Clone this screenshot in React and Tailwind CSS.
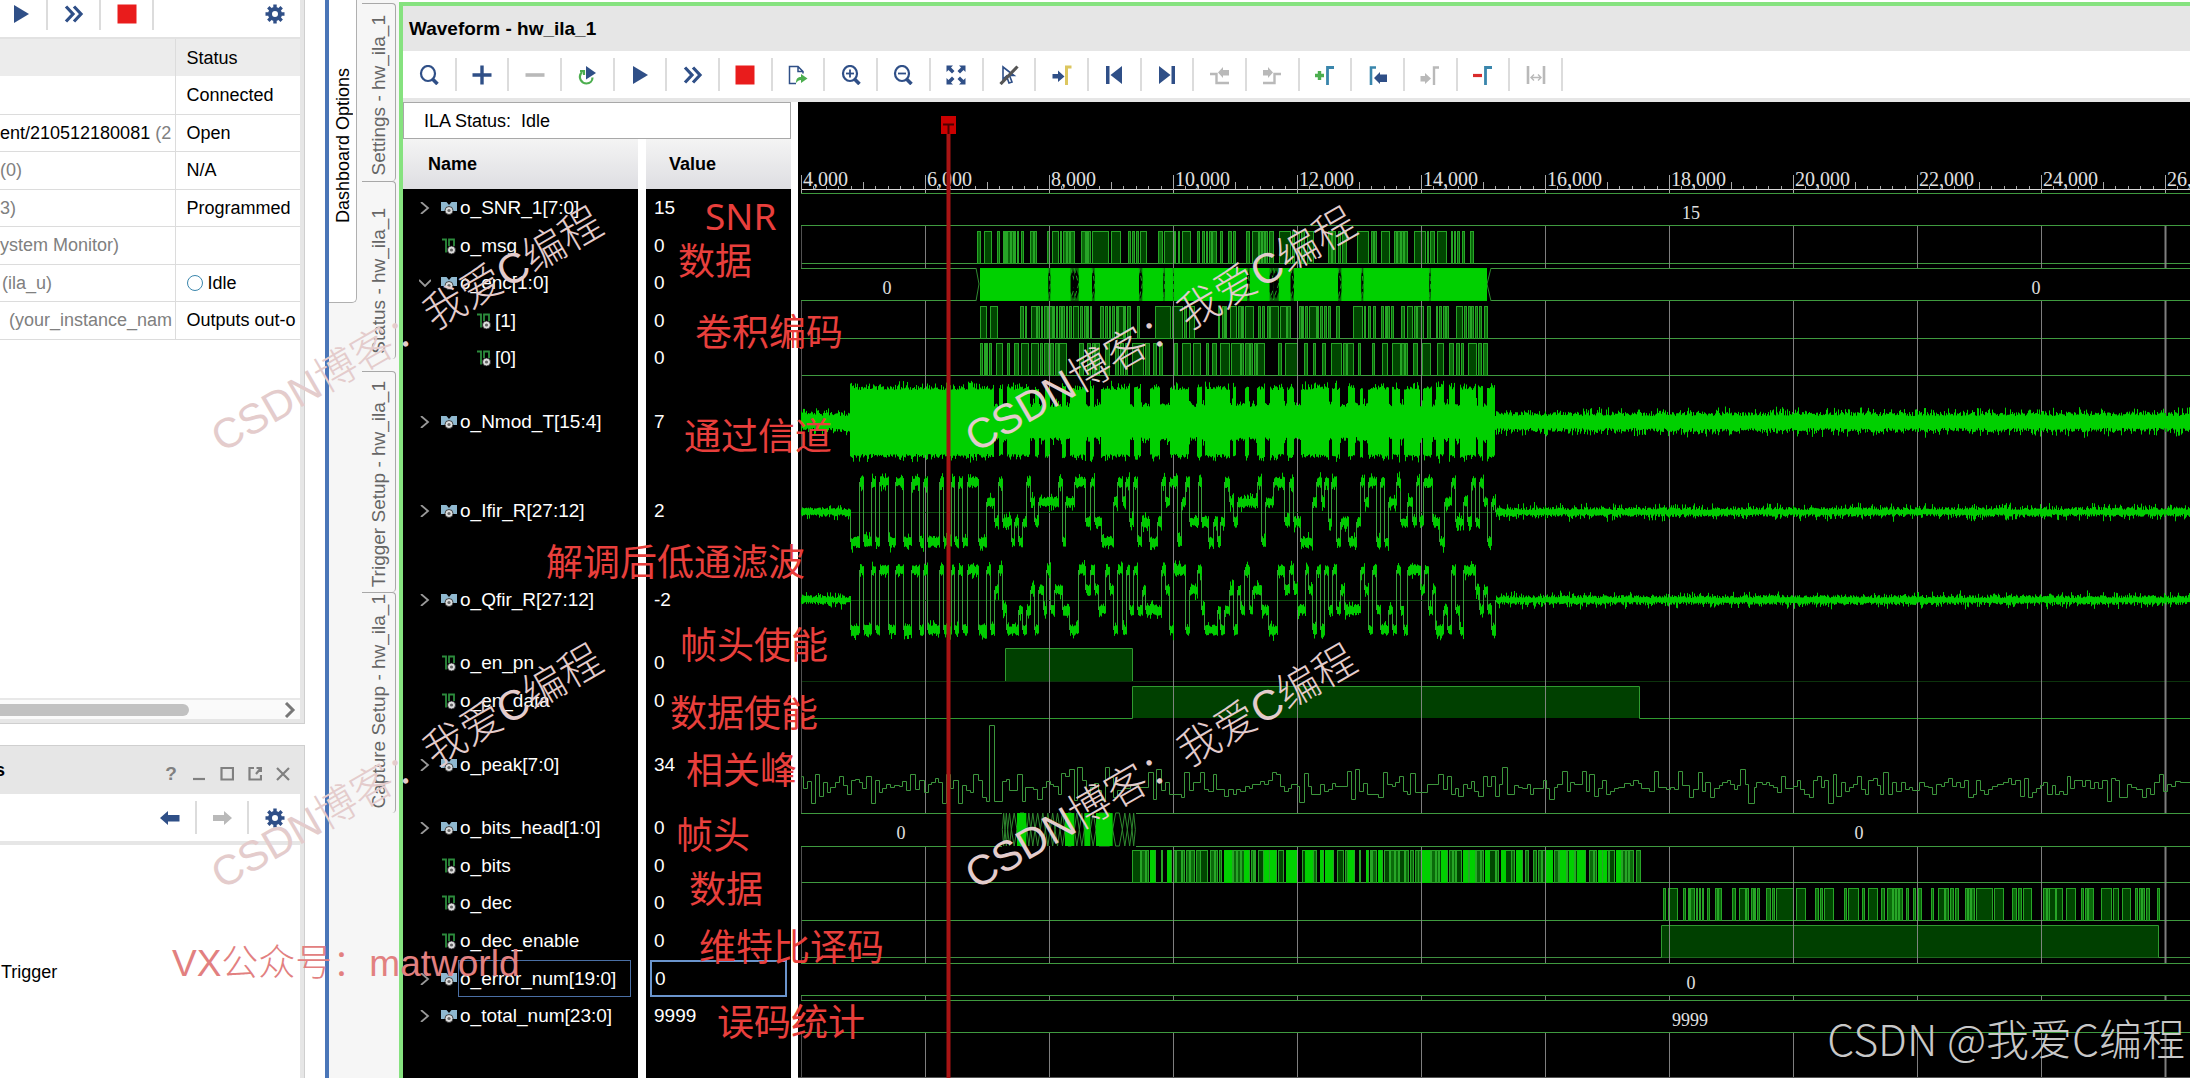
import { Fragment } from "react";

const NAVY = "#2f4f87";

/* ---------- icons ---------- */

const Icon = ({ children, size = 20 }) => (
  <svg width={size} height={size} viewBox="0 0 20 20" fill="none" aria-hidden="true">{children}</svg>
);

const Play = () => <Icon><path d="M3 1 L18 10 L3 19Z" fill={NAVY} /></Icon>;
const FastForward = () => (
  <Icon><path d="M2 2.5 L9 10 L2 17.5 M10 2.5 L17 10 L10 17.5" stroke={NAVY} strokeWidth="3.2" /></Icon>
);
const Stop = () => <Icon><rect x="0.5" y="0.5" width="19" height="19" fill="#e91c1c" /></Icon>;
const Gear = () => (
  <Icon>
    <circle cx="10" cy="10" r="5" stroke={NAVY} strokeWidth="4" />
    <path d="M10 0.5V4 M10 16V19.5 M0.5 10H4 M16 10H19.5 M3.3 3.3L5.8 5.8 M14.2 14.2L16.7 16.7 M3.3 16.7L5.8 14.2 M14.2 5.8L16.7 3.3" stroke={NAVY} strokeWidth="3.4" />
  </Icon>
);
const Search = ({ sign }) => (
  <Icon>
    <ellipse cx="9" cy="8.5" rx="7" ry="7.5" stroke={NAVY} strokeWidth="2.2" />
    <path d="M13.5 14 L18.5 19" stroke={NAVY} strokeWidth="3.6" />
    {sign && <path d="M5 8.5H13" stroke={NAVY} strokeWidth="1.8" />}
    {sign === "+" && <path d="M9 4.5V12.5" stroke={NAVY} strokeWidth="1.8" />}
  </Icon>
);
const Plus = () => <Icon><path d="M10 0.5V19.5 M0.5 10H19.5" stroke={NAVY} strokeWidth="3.4" /></Icon>;
const Minus = () => <Icon><path d="M0.5 10H19.5" stroke="#b9b9b9" strokeWidth="3.6" /></Icon>;
const Rerun = () => (
  <Icon>
    <path d="M3 6 H7 V10 M5 7 C0 13 5 18.5 9.5 18.5 C13 18.5 15.5 16 15.5 12.5" stroke="#4cae4f" strokeWidth="2.2" />
    <path d="M9 1 L19 8 L9 14.500Z" fill={NAVY} />
  </Icon>
);
const Export = () => (
  <Icon>
    <path d="M8 18.500H1.500V1.500H10L15 6.500V8.500 M10 1.500V6.500H15" stroke={NAVY} strokeWidth="1.5" />
    <path d="M8 18 C8 13.500 10 12 13 12 V9 L19.500 13.500 L13 18 V15 C11 15 9.500 16 8 18Z" fill="#4cae4f" />
  </Icon>
);
const Fit = () => (
  <Icon>
    <path d="M0.5 0.5H7L5 2.500L8.500 6L6 8.500L2.500 5L0.500 7Z M19.500 0.500H13L15 2.500L11.500 6L14 8.500L17.500 5L19.500 7Z M0.500 19.500H7L5 17.500L8.500 14L6 11.500L2.500 15L0.500 13Z M19.500 19.500H13L15 17.500L11.500 14L14 11.500L17.500 15L19.500 13Z" fill={NAVY} />
  </Icon>
);
const NoPointer = () => (
  <Icon>
    <path d="M4 2 L4 14 L7.500 11 L10 18 L13 17 L10.500 10.500 H15Z" stroke={NAVY} strokeWidth="1.6" />
    <path d="M1.500 19 L18.500 1.500" stroke="#555" strokeWidth="3.2" />
  </Icon>
);
const GotoCursor = () => (
  <Icon>
    <path d="M0.500 9H6V5.500L12.500 11.500L6 17V13.500H0.500Z" fill={NAVY} />
    <path d="M14.500 20V2H19.500" stroke="#dcc65f" strokeWidth="3" />
  </Icon>
);
const First = () => <Icon><path d="M2 1H5.500V19H2Z M18 1V19L6.500 10Z" fill={NAVY} /></Icon>;
const Last = () => <Icon><path d="M14.500 1H18V19H14.500Z M2 1V19L13.500 10Z" fill={NAVY} /></Icon>;
const PrevEdge = () => (
  <Icon>
    <path d="M0 9H6.500V18H19" stroke="#b9b9b9" strokeWidth="2.4" />
    <path d="M8 7.500L13 2V5H19V10.500H13V13Z" fill="#b9b9b9" />
  </Icon>
);
const NextEdge = () => (
  <Icon>
    <path d="M1 18H12.500V9H19" stroke="#b9b9b9" strokeWidth="2.4" />
    <path d="M11 7.500L6 2V5H1V10.500H6V13Z" fill="#b9b9b9" />
  </Icon>
);
const AddMarker = () => (
  <Icon>
    <path d="M4.500 6V15 M0 10.500H9" stroke="#4cae4f" strokeWidth="3.4" />
    <path d="M12.500 20V2.500H19" stroke="#3a86ac" strokeWidth="2.8" />
  </Icon>
);
const PrevMarker = () => (
  <Icon>
    <path d="M3 20V2.500H8" stroke="#3a86ac" strokeWidth="2.6" />
    <path d="M6 13L12 7V9.500H19V17H12V19Z" fill={NAVY} />
  </Icon>
);
const NextMarker = () => (
  <Icon>
    <path d="M0.500 11H5V8L11 13.500L5 19V16.500H0.500Z" fill="#b9b9b9" />
    <path d="M14 20V2.500H19" stroke="#b9b9b9" strokeWidth="2.4" />
  </Icon>
);
const RemoveMarker = () => (
  <Icon>
    <path d="M0 10.500H9" stroke="#d92b2b" strokeWidth="3.2" />
    <path d="M12.500 20V2.500H19" stroke="#3a86ac" strokeWidth="2.8" />
  </Icon>
);
const Span = () => (
  <Icon>
    <path d="M2 1V19 M18 1V19" stroke="#b9b9b9" strokeWidth="2.6" />
    <path d="M5 12.500H15 M8 9.500L5 12.500L8 15.500 M12 9.500L15 12.500L12 15.500" stroke="#b9b9b9" strokeWidth="1.4" />
  </Icon>
);
const Arrow = ({ flip, color }) => (
  <Icon>
    <path d={flip ? "M20 10L12 3V7H1V13H12V17Z" : "M0 10L8 3V7H19.500V13.500H8V17Z"} fill={color} />
  </Icon>
);

const BusIcon = () => (
  <svg width="18" height="16" viewBox="0 0 18 16" className="shrink-0" aria-hidden="true">
    <path d="M1 2H6.500L9 5L11.500 2H17V11H1Z" fill="#8fb8cf" />
    <circle cx="9" cy="10.500" r="4" fill="#dedede" stroke="#222" strokeWidth="0.800" />
    <circle cx="9" cy="10.500" r="1.600" fill="#666" />
  </svg>
);
const BitIcon = () => (
  <svg width="16" height="18" viewBox="0 0 16 18" className="shrink-0" aria-hidden="true">
    <path d="M1 2.500H5V15.500 M8 9V2.500H13V9" stroke="#2c8c3c" strokeWidth="1.800" fill="none" />
    <circle cx="10.500" cy="13" r="4" fill="#dedede" stroke="#222" strokeWidth="0.800" />
    <circle cx="10.500" cy="13" r="1.600" fill="#666" />
  </svg>
);
const Chevron = ({ open }) => (
  <svg width="12" height="12" viewBox="0 0 12 12" fill="none" aria-hidden="true">
    <path d={open ? "M0 3L6 9L12 3" : "M2 0L9 6L2 12"} stroke="#999" strokeWidth="1.800" />
  </svg>
);

/* ---------- data ---------- */

const devices = [
  ["", "", "Connected"],
  ["ent/210512180081 ", "(2", "Open"],
  ["", "(0)", "N/A"],
  ["", "3)", "Programmed"],
  ["", "ystem Monitor)", ""],
  ["", "(ila_u)", "Idle"],
  ["", "(your_instance_nam", "Outputs out-o"],
];

const H37 = "h-[37px]";
const H38 = "h-[38px]";
const H89 = "h-[89px]";

const signals = [
  { name: "o_SNR_1[7:0]", value: "15", kind: "bus", h: H38 },
  { name: "o_msg", value: "0", kind: "bit", h: H37 },
  { name: "o_enc[1:0]", value: "0", kind: "bus", open: true, h: H38 },
  { name: "[1]", value: "0", kind: "child", h: H37 },
  { name: "[0]", value: "0", kind: "child", h: H38 },
  { name: "o_Nmod_T[15:4]", value: "7", kind: "bus", h: H89 },
  { name: "o_Ifir_R[27:12]", value: "2", kind: "bus", h: H89 },
  { name: "o_Qfir_R[27:12]", value: "-2", kind: "bus", h: H89 },
  { name: "o_en_pn", value: "0", kind: "bit", h: H38 },
  { name: "o_en_data", value: "0", kind: "bit", h: H38 },
  { name: "o_peak[7:0]", value: "34", kind: "bus", h: H89 },
  { name: "o_bits_head[1:0]", value: "0", kind: "bus", h: H38 },
  { name: "o_bits", value: "0", kind: "bit", h: H37 },
  { name: "o_dec", value: "0", kind: "bit", h: H38 },
  { name: "o_dec_enable", value: "0", kind: "bit", h: H38 },
  { name: "o_error_num[19:0]", value: "0", kind: "bus", selected: true, h: H37 },
  { name: "o_total_num[23:0]", value: "9999", kind: "bus", h: H38 },
];

const tools = [
  ["Search", <Search />],
  ["Add", <Plus />],
  ["Remove", <Minus />],
  ["Re-run trigger", <Rerun />],
  ["Run trigger", <Play />],
  ["Run trigger immediate", <FastForward />],
  ["Stop trigger", <Stop />],
  ["Export data", <Export />],
  ["Zoom in", <Search sign="+" />],
  ["Zoom out", <Search sign="-" />],
  ["Zoom fit", <Fit />],
  ["Toggle pointer", <NoPointer />],
  ["Go to cursor", <GotoCursor />],
  ["Go to start", <First />],
  ["Go to end", <Last />],
  ["Previous transition", <PrevEdge />],
  ["Next transition", <NextEdge />],
  ["Add marker", <AddMarker />],
  ["Previous marker", <PrevMarker />],
  ["Next marker", <NextMarker />],
  ["Remove marker", <RemoveMarker />],
  ["Swap cursors", <Span />],
];

// pulse edges, three ticks per pixel: rise, fall, rise, fall, ...
const shift = (list, by) => list.map((t) => t + by);
const B = 1230;

const msg = [
  562,572,583,605,622,629,639,643,645,648,652,660,662,668,672,675,680,684,694,701,719,729,731,737,772,778,787,806,810,814,818,828,831,836,841,853,873,884,887,890,894,899,905,952,963,989,1015,1022,1026,1031,1039,1044,1051,1069,1105,1116,1122,1148,1153,1157,1163,1167,1177,1202,1220,1227,
  ...shift([5,12,17,20,27,32,37,50,60,67,84,92,98,103,137,147,155,173,178,184,187,192,196,203,207,218,237,270,275,282,290,297,303,312,322,340,384,392,397,407,414,421,425,436,472,506,513,518,523,530,544,568,583,588,592,600,603,609,613,623,643,676,680,684,689,702,710,737,753,757,761,764,771,778,785,791,811,820], B),
];
const enc1 = [
  571,590,599,620,689,699,706,710,723,737,742,747,754,757,762,770,774,786,790,794,798,802,807,813,817,824,828,832,837,843,850,866,870,876,881,887,892,896,901,905,931,940,945,950,956,959,965,972,977,980,984,998,1003,1007,1012,1022,1042,1049,1094,1140,1146,1176,1183,1190,1197,1211,
  ...shift([54,58,67,72,76,80,91,110,114,122,126,130,135,160,175,181,187,193,200,206,211,236,241,258,262,272,296,301,306,309,316,321,326,346,350,354,359,366,371,377,383,389,407,415,460,487,492,496,503,508,519,526,544,549,554,557,561,568,573,578,604,613,621,636,641,646,651,668,680,688,709,713,717,722,729,734,739,746,768,785,791,797,803,808,814,820,826,832,838,844,851,860], B),
];
const enc0 = [
  570,576,582,585,589,592,596,603,618,637,652,658,672,683,693,715,722,744,750,756,762,775,780,788,794,803,808,828,866,878,890,899,905,912,916,928,945,958,974,982,990,1000,1005,1012,1026,1060,1066,1078,1090,1100,1108,1118,1152,1160,1177,1202,1209,1230,
  ...shift([18,25,37,48,59,86,92,118,124,130,134,146,151,157,163,168,170,191,235,245,256,293,312,322,340,346,367,377,393,422,429,437,442,461,474,481,515,520,545,560,577,600,604,612,615,622,640,652,667,692,710,728,747,760,768,778,784,790,805,828,833,841,848,860], B),
];
const bits = [
  1025,1048,1053,1064,1069,1076,1080,1096,1114,1118,1131,1144,1148,1153,1157,1172,1177,1184,1187,1197,1201,1213,1217,1228,
  ...shift([0,22,30,42,46,52,56,62,72,97,100,108,112,120,123,133,135,147,152,158,161,165,175,190,192,206,211,229,233,247,258,290,306,337,340,350,360,369,374,397,411,430,434,440,443,461,478,482,499,506,510,514,517,530,533,546,552,566,569,580,584,592,596,612,616,626,630,640,644,652,655,664,666,690,694,706,709,714,717,741,746,755,758,764,768,784,789,803,806,824,828,840,843,848,854,885,889,895,902,932,934,944,948,967,975,983,1000,1010,1014,1022,1027,1058,1062,1074,1077,1098,1102,1122,1125,1154,1167,1180,1183,1190,1193,1205,1208,1222,1228,1242,1247,1262,1266,1274,1277,1283,1287,1300,1308,1319], B),
];
// runs of o_bits that toggle faster than one pixel
const bitsSolid = [
  1080,1096,1131,1144,
  ...shift([72,97,133,147,192,206,211,229,258,290,314,337,360,369,374,397,443,461,499,506,533,546,666,690,722,741,789,803,810,824,854,870,902,918,948,967,1034,1058,1080,1098,1106,1122,1130,1154,1193,1205,1210,1222,1247,1262], B),
];
const decRaw = [168,174,182,206,220,226,235,237,240,250,255,258,263,266,270,273,285,291,306,311,314,322,352,360,369,385,389,393,402,406,410,413,418,424,441,452,457,462,468,512,522,545,571,579,585,589,595,618,649,655,660,687,695,701,711,735,748,755,763,775,779,784,787,791,795,802,812,818,833,839,844,852,880,886,898,913,918,926,930,937,942,950,969,975,978,982,987,994,998,1040,1048,1072,1096,1107,1111,1118,1125,1146,1177,1184,1187,1191,1193,1208,1213,1230,1239,1262,1277,1282,1288,1292,1296,1308,1330,1357,1362,1376,1388,1410,1422,1428,1431,1436,1440,1446,1450,1457,1479,1485];
const dec = decRaw.map((t) => 2430 + t * 1.129);

// spans where the modulated carrier is at full swing
const carrier = [
  178,610,627,638,651,718,733,745,765,780,815,828,840,887,900,912,932,1018,1030,1052,1078,1108,1138,1197,1220,1236,
  ...shift([14,88,98,107,135,147,170,194,208,252,260,280,303,385,396,420,443,465,478,488,504,565,574,600,612,659,669,696,706,732,745,765,780,828,834,848,861,884], B),
];

// symbol levels after the low-pass filter
const LV = { H: 30, h: 10, l: -10, L: -30, 0: 0 };
const parse = (text, by = 0) => text.split(" ").map((s) => [parseInt(s, 10) + by, LV[s[s.length - 1]]]);
const preamble = "181L 210H 221L 246H 257L 269H 296L 317H 342L 365H 390L 400H 412L 448H 460L 484H 495L 507H 518L 532H 567L ";
const iLevels = [
  [34, 0],
  ...parse(preamble + "590h 613l 627H 638l 664L 674l 686L 698l 710H 722h 733l 745h 806H 817L 828h 854H 887l 902H 913l 935L 972h 984H 997h 1007H 1019l 1031H 1044L 1056l 1078L 1102l 1114H 1127h 1139H 1163L 1176h 1187H 1199l 1225H"),
  ...parse("5l 25L 42l 54L 62l 75H 89h 100l 113h 172H 184L 197h 220H 255l 268H 281l 302L 338h 350H 364h 375H 387l 396H 411L 422l 445L 470l 481H 493h 506H 529L 543H 554L 566h 591H 602l 624h 637l 649H 660l 672H 698l 720L 733h 756H 767l 791h 803l 815H 826l 838H 850h 862L 876h", B),
  [2116, 0],
];
const qLevels = [
  [34, 0],
  ...parse(preamble + "590H 602L 613h 627H 639l 650L 686l 698L 710l 722h 733L 745h 760l 770H 782l 793h 819l 840L 866H 888h 902H 913h 925l 948H 960h 972L 984H 997L 1009H 1020l 1032H 1044l 1057h 1068l 1115H 1128h 1140L 1152H 1188L 1200h 1224H"),
  ...parse("5l 15L 52l 63L 75l 88h 100L 112h 123l 135H 148l 158h 184l 207L 232H 255h 268H 280h 292l 316H 327h 338L 350H 362L 375H 387l 397H 411l 421h 434l 481H 493h 506L 518H 529l 541L 566l 577L 590H 602l 612L 624H 661h 673H 686l 697h 708L 732l 744L 756H 768l 780L 792H 828h 840l 850h 864l 875L", B),
  [2116, 0],
];

// o_peak staircase: time, height, time, height, ...
const peakA = [34,440,39,475,50,452,63,520,75,433,87,499,98,457,110,487,121,470,134,457,146,439,160,466,170,493,182,451,194,446,207,457,216,475,228,439,243,520,254,451,266,487,277,475,287,463,300,470,313,464,327,469,337,452,349,480,361,433,375,478,387,451,402,486,413,463,424,457,434,445,445,457,457,520,467,433,480,475,490,450,505,520,516,464,528,481,540,487,550,433,563,451,575,502,588,514,598,286,611,514,637,452,648,446,658,480,682,433,695,514,705,470,730,478,742,508,756,472,768,452,780,463,790,469,803,493,814,428,826,438,838,418,851,510,862,412,875,450,887,490,900,470,912,460,925,480,933,510,946,412,958,440,968,500,980,480,1000,475,1020,465,1045,470,1073,425,1090,508,1099,418,1113,481,1124,457,1138,492,1172,502,1183,425,1196,481,1208,457];
const peakB = [0,395,13,448,25,454,38,403,49,448,72,469,85,446,98,463,109,446,121,454,134,439,146,445,157,433,180,422,192,432,205,421,215,397,228,403,240,439,252,454,264,445,274,433,290,439,298,485,313,398,323,439,334,463,360,433,372,454,385,446,395,428,406,439,442,394,454,478,466,388,478,454,490,428,501,463,535,472,550,395,562,433,575,438,585,427,598,409,610,454,622,463,631,398,645,455,680,433,715,403,730,448,740,409,753,463,765,445,775,469,788,433,800,445,812,422,823,454,835,469,848,409,860,438,872,409,885,469,896,433,905,382,920,463,942,434,955,440,967,445,980,433,990,463,1000,445,1028,421,1038,445,1048,478,1062,440,1072,433,1085,394,1100,454,1110,427,1122,433,1145,394,1158,454,1168,403,1181,469,1195,445];
const peakC = [0,265,5,241,15,283,27,274,37,265,48,260,65,249,80,255,88,241,100,249,108,265,130,274,143,214,155,260,175,268,186,260,196,268,207,214,217,255,237,292,248,268,260,217,270,274,280,247,292,292,302,265,315,255,325,247,337,241,345,252,357,268,363,256,373,208,385,253,393,310,408,261,415,247,430,252,440,247,450,255,460,262,470,275,480,229,492,265,513,259,523,241,532,268,543,283,555,290,566,241,576,229,586,262,596,241,606,310,618,223,628,288,640,247,651,274,662,262,672,253,682,229,694,268,704,283,713,240,725,235,737,255,745,283,753,217,764,283,777,247,787,274,800,247,810,268,820,262,830,270,848,247,862,259,872,262,882,283,893,253,905,259,914,247,925,235,935,259,945,247,957,262,967,241,978,290,990,283,1000,241,1010,271,1020,283,1030,268,1042,259,1055,252,1072,247,1083,235,1093,253,1103,241,1115,288,1126,235,1136,292,1147,275,1158,265,1168,255,1178,247,1188,283,1200,255,1210,283,1220,274,1230,283,1240,229,1250,265,1260,241,1280,259,1290,240,1302,265,1312,247,1323,265,1335,241,1347,304,1357,235,1368,241,1378,290,1400,253,1412,262,1425,268,1440,292,1450,265,1462,283,1472,247,1485,223,1495,274,1507,253,1517,259,1527,243,1540,247,1568,247];
const pairs = (list) => list.reduce((out, v, i) => (i % 2 ? out : [...out, [v, list[i + 1]]]), []);
const peak = [
  ...pairs(peakA).map(([t, v]) => [t, 630 + v / 3]),
  ...pairs(peakB).map(([t, v]) => [t + B, 640 + v / 3]),
  ...pairs(peakC).map(([t, v]) => [2430 + t * 1.129, 700 + v / 3]),
];

/* ---------- waveform drawing ---------- */

const px = (t) => 790 + t / 3;
const LEFT = 801;
const RIGHT = 2190;

const makeRandom = (seed) => () => {
  seed = (seed * 1664525 + 1013904223) % 4294967296;
  return seed / 4294967296;
};

const carrierPath = () => {
  const rnd = makeRandom(7);
  const spans = pairs(carrier);
  let d = "";
  for (let x = LEFT; x < RIGHT; x++) {
    const t = (x - 790) * 3;
    let base = 5;
    if (t >= 178 && t < 2114) base = spans.some(([a, b]) => t >= a && t < b) ? 31 : 14;
    const spike = () => base + rnd() * 4 + (rnd() > 0.7 ? rnd() * 6 : 0);
    d += `M${x + 0.5} ${(421 - spike()).toFixed(1)}V${(423 + spike()).toFixed(1)}`;
  }
  return d;
};

const levelPaths = (levels, mid, seed) => {
  const rnd = makeRandom(seed);
  let edges = "";
  let noise = "";
  let prev = 0;
  let i = 0;
  for (let x = LEFT; x < RIGHT; x++) {
    const t = (x - 790) * 3;
    while (i + 1 < levels.length && levels[i + 1][0] <= t) i++;
    const v = levels[i][1];
    if (v !== prev) edges += `M${x - 0.5} ${mid - prev}V${mid - v}`;
    prev = v;
    const swing = v === 0 ? 2 : 3;
    const up = swing + rnd() * 3 + (rnd() > 0.75 ? rnd() * 5 : 0);
    const down = swing + rnd() * 3 + (rnd() > 0.75 ? rnd() * 5 : 0);
    noise += `M${x + 0.5} ${(mid - v - up).toFixed(1)}V${(mid - v + down).toFixed(1)}`;
  }
  return [edges, noise];
};

const Pulses = ({ edges, top, bottom }) => (
  <g>
    <path d={`M${LEFT} ${bottom}.5H${RIGHT}`} stroke="#3f9a3f" />
    {pairs(edges).map(([a, b]) => (
      <rect
        key={a}
        x={Math.round(px(a)) + 0.5}
        y={top + 0.5}
        width={Math.max(1, Math.round((b - a) / 3))}
        height={bottom - top}
        fill={b - a < 14 ? "#0a6a0a" : "#004600"}
        stroke="#27a527"
      />
    ))}
  </g>
);

const BusRails = ({ top, bottom, spans }) => (
  <path d={spans.map(([a, b]) => `M${a} ${top}.5H${b}M${a} ${bottom}.5H${b}`).join("")} stroke="#3f9a3f" fill="none" />
);

const Diamonds = ({ cuts, top, bottom }) => {
  const mid = (top + bottom) / 2;
  return (
    <path
      d={cuts.slice(1).map((c, i) => {
        const a = px(cuts[i]);
        const b = px(c);
        const s = Math.min(3, (b - a) / 2);
        return `M${a} ${mid}L${a + s} ${top}H${b - s}L${b} ${mid}L${b - s} ${bottom}H${a + s}Z`;
      }).join("")}
      stroke="#2f8a2f"
      fill="none"
    />
  );
};

function Waves() {
  const [iEdges, iNoise] = levelPaths(iLevels, 512, 11);
  const [qEdges, qNoise] = levelPaths(qLevels, 600, 23);
  const majors = Array.from({ length: 12 }, (_, i) => 801 + i * 124);
  const minors = Array.from({ length: 113 }, (_, i) => i).filter((i) => i % 10);
  const gridSpans = [[225, 268], [301, 813], [846, 963], [995, 1000], [1032, 1078]];
  const stairs = peak.map(([t, y], i) => (i ? `H${Math.round(px(t)) + 0.5}V${Math.round(y) + 0.5}` : `M${px(t)} ${y}`)).join("");
  const gaps = [[778, 3], [849, 7], [859, 7], [910, 4], [1052, 5], [1122, 2], [1150, 1], [1375, 4], [1447, 8], [1458, 8], [1507, 5], [1649, 5], [1717, 3], [1920, 2]];

  return (
    <svg width="1392" height="976" className="block" role="img" aria-label="Waveform traces">
      <g transform="translate(-798 -102)">
        <Pulses edges={msg} top={231} bottom={263} />
        <Pulses edges={enc1} top={306} bottom={338} />
        <Pulses edges={enc0} top={343} bottom={375} />
        <path d={`M${LEFT} 681.5H${RIGHT}`} stroke="#0c330c" />
        <path d={`M${LEFT} 718.5H1132.500V686.500H1639.500V718.500H${RIGHT}`} stroke="#2f9a2f" fill="none" />
        <path d="M1133 687H1639V718H1133Z" fill="#004000" />
        <path d="M1005.500 681V648.500H1132.500V681" stroke="#2f9a2f" fill="#004000" />
        <Pulses edges={bits} top={850} bottom={882} />
        {pairs(bitsSolid).map(([a, b]) => (
          <rect key={a} x={Math.round(px(a))} y="850" width={Math.round((b - a) / 3)} height="33" fill="#00d000" />
        ))}
        <Pulses edges={dec} top={888} bottom={920} />
        <path d={`M${LEFT} 957.500H${RIGHT}`} stroke="#3f8f3f" />
        <path d="M1661.500 957.500V925.500H2158.500V957.500" stroke="#2f9a2f" fill="#004000" />

        {majors.map((x) => (
          <path key={x} d={gridSpans.map(([a, b]) => `M${x}.5 ${a}V${b}`).join("")} stroke={x === 801 ? "#5a5a5a" : "#8c8c8c"} strokeOpacity="0.9" strokeWidth={x === 2165 ? 2 : 1} />
        ))}

        <BusRails top={193} bottom={225} spans={[[LEFT, RIGHT]]} />
        <BusRails top={268} bottom={300} spans={[[LEFT, 976], [1491, RIGHT]]} />
        <path d="M976 268L979 284L976 301 M1491 268L1487 284L1491 301" stroke="#2f8a2f" fill="none" />
        <rect x="980" y="268" width="507" height="33" fill="#00d000" />
        {gaps.map(([t, w]) => {
          const x = px(t);
          const h = w / 3;
          return (
            <Fragment key={t}>
              <rect x={x - h} y="268" width={h * 2} height="33" fill="#0a6a0a" />
              <path d={`M${x} 270L${x + h} 276V292L${x} 299L${x - h} 292V276Z`} fill="#000" />
              <path d={`M${x - h} 268L${x + h} 284L${x - h} 300`} stroke="#1f9a1f" strokeDasharray="5 3" fill="none" />
            </Fragment>
          );
        })}

        <path d={carrierPath()} stroke="#00d000" />
        <path d={`M${LEFT} 512.500H${RIGHT}M${LEFT} 600.500H${RIGHT}`} stroke="#0f4a0f" />
        <path d={iEdges + qEdges} stroke="#3a9a3a" />
        <path d={iNoise + qNoise} stroke="#00cc00" />
        <path d={stairs} stroke="#3c963c" fill="none" />

        <BusRails top={813} bottom={846} spans={[[LEFT, 1002], [1136, RIGHT]]} />
        <Diamonds cuts={[637, 645, 653, 664, 681, 711, 722, 735, 751, 766, 781, 795, 810, 825, 853, 868, 883, 901, 918, 968, 997, 1012, 1026, 1036]} top={813} bottom={846} />
        {[[681, 709], [825, 853], [883, 901], [918, 968]].map(([a, b]) => (
          <rect key={a} x={px(a)} y="813" width={(b - a) / 3} height="33" fill="#00d000" />
        ))}
        <BusRails top={963} bottom={995} spans={[[LEFT, RIGHT]]} />
        <BusRails top={1000} bottom={1032} spans={[[LEFT, RIGHT]]} />
        <path d={`M798 1077.500H${RIGHT}`} stroke="#555" />

        {/* ruler */}
        <path d={`M${LEFT} 189.500H${RIGHT}`} stroke="#d8d8d8" />
        <path d={majors.map((x) => `M${x}.5 175V193`).join("")} stroke="#a8a8a8" />
        <path d={minors.map((i) => `M${Math.round(801 + i * 12.4)}.5 ${i % 5 ? 186 : 182}V189`).join("")} stroke="#a8a8a8" />
        <g fill="#e0e0e0" className="font-['Liberation_Serif',serif] text-[20px]">
          {majors.map((x, i) => (
            <text key={x} x={x + 2} y="186">{(4000 + i * 2000).toLocaleString("en-US")}</text>
          ))}
        </g>
        <g fill="#e0e0e0" textAnchor="middle" className="font-['Liberation_Serif',serif] text-[18px]">
          <text x="1691" y="219">15</text>
          <text x="887" y="294">0</text>
          <text x="2036" y="294">0</text>
          <text x="901" y="839">0</text>
          <text x="1859" y="839">0</text>
          <text x="1691" y="989">0</text>
          <text x="1690" y="1026">9999</text>
        </g>

        {/* trigger marker */}
        <path d="M948.500 134V1078" stroke="#a81414" strokeWidth="4" />
        <rect x="941" y="116" width="15" height="18" fill="#cc0000" />
        <path d="M943 124.500H954M948.500 124V134" stroke="#4a0000" strokeWidth="2" />
      </g>
    </svg>
  );
}

/* ---------- panels ---------- */

const ToolButton = ({ label, children, className = "" }) => (
  <button type="button" aria-label={label} className={`flex h-[33px] items-center justify-center ${className}`}>
    {children}
  </button>
);

function DevicePanel() {
  return (
    <section className="flex h-[724px] flex-col border-r border-b border-[#cfcfcf] bg-[#e6e6e6] pr-[4px] pb-[4px]">
      <div className="flex h-[37px] shrink-0 items-start bg-white">
        <ToolButton label="Run trigger" className="-mt-[3px] w-[48px] border-r-2 border-[#dcdcdc] pr-[4px]"><Play /></ToolButton>
        <ToolButton label="Run trigger immediate" className="-mt-[3px] w-[53px] border-r-2 border-[#dcdcdc]"><FastForward /></ToolButton>
        <ToolButton label="Stop trigger" className="-mt-[3px] w-[53px] border-r-2 border-[#dcdcdc]"><Stop /></ToolButton>
        <ToolButton label="Settings" className="-mt-[3px] mr-[15px] ml-auto"><Gear /></ToolButton>
      </div>
      <div className="flex-1 overflow-hidden border-t-2 border-[#e2e2e2] bg-white">
        <table className="w-full table-fixed border-collapse text-[18px] leading-[22px] whitespace-nowrap">
          <thead>
            <tr className="h-[37px] bg-[#ececec] text-left">
              <th className="w-[175px] border-r border-[#dcdcdc]"><span className="sr-only">Name</span></th>
              <th className="pl-[11px] font-normal">Status</th>
            </tr>
          </thead>
          <tbody>
            {devices.map(([main, extra, status], i) => (
              <tr key={i} className="h-[37px] border-b border-[#dcdcdc] odd:h-[38px]">
                <td className={`overflow-hidden border-r border-[#dcdcdc] ${i === 6 ? "pl-[9px]" : i === 5 ? "pl-[2px]" : ""}`}>
                  {main}<span className="text-[#808080]">{extra}</span>
                </td>
                <td className="overflow-hidden pl-[11px]">
                  <span className="flex items-center gap-[5px]">
                    {status === "Idle" && <span className="size-[16px] rounded-full border border-[#3a86ac]" />}
                    {status}
                  </span>
                </td>
              </tr>
            ))}
          </tbody>
        </table>
      </div>
      <div className="flex h-[21px] shrink-0 items-center justify-between border-t-2 border-[#e8e8e8] bg-[#fafafa] pr-[4px]">
        <div className="h-[12px] w-[189px] rounded-r-full bg-[#c1c1c1]" />
        <svg width="12" height="16" viewBox="0 0 12 16" fill="none" aria-hidden="true">
          <path d="M2 1L9 8L2 15" stroke="#777" strokeWidth="3" />
        </svg>
      </div>
    </section>
  );
}

function TriggerPanel() {
  return (
    <section className="mt-[21px] flex flex-1 flex-col border-t border-r border-[#cfcfcf] bg-[#e6e6e6] pr-[4px]">
      <header className="flex h-[48px] shrink-0 items-center justify-between pr-[10px]">
        <h2 className="-ml-[5px] text-[18px] font-bold">s</h2>
        <div className="flex gap-[14px] pt-[8px]">
          <button type="button" aria-label="Help" className="w-[14px] text-[19px] leading-[18px] font-bold text-[#808080]">?</button>
          {[
            ["Minimize", "M1 13H13"],
            ["Maximize", "M1.500 2H13V13.500H1.500Z"],
            ["Float", "M6 2H1.500V13.500H13V9 M8 8L13 2 M8.500 2H13V6"],
            ["Close", "M1 2L13 14M13 2L1 14"],
          ].map(([label, d]) => (
            <button key={label} type="button" aria-label={label}>
              <svg width="14" height="16" viewBox="0 0 14 16" fill="none"><path d={d} stroke="#808080" strokeWidth="2.200" /></svg>
            </button>
          ))}
        </div>
      </header>
      <div className="flex h-[47px] shrink-0 items-center justify-end bg-white">
        <ToolButton label="Back" className="w-[53px] border-r-2 border-[#dcdcdc]"><Arrow color={NAVY} /></ToolButton>
        <ToolButton label="Forward" className="w-[52px] border-r-2 border-[#dcdcdc]"><Arrow flip color="#b9b9b9" /></ToolButton>
        <ToolButton label="Settings" className="w-[51px]"><Gear /></ToolButton>
      </div>
      <div className="mt-[4px] flex-1 bg-white pt-[116px] pl-[1px] text-[18px] leading-[22px]">Trigger</div>
    </section>
  );
}

const sideTabs = [
  ["Settings - hw_ila_1", "h-[178px]"],
  ["Status - hw_ila_1", "h-[178px] mb-[12px]"],
  ["Trigger Setup - hw_ila_1", "h-[221px]"],
  ["Capture Setup - hw_ila_1", "h-[221px]"],
];

function SideTabs() {
  return (
    <nav className="flex w-[74px] shrink-0 gap-[5px] border-l-4 border-[#4a76b8] bg-[#f6f6f6]">
      <button type="button" className="flex h-[303px] w-[28px] items-start justify-center rounded-br-[5px] border-r border-b border-[#b0b0b0] bg-white pt-[68px] text-[18px] leading-[22px]">
        <span className="rotate-180 [writing-mode:vertical-rl]">Dashboard Options</span>
      </button>
      <div className="flex flex-col pt-[3px]">
        {sideTabs.map(([label, size]) => (
          <button key={label} type="button" className={`flex w-[34px] items-end justify-center rounded-r-[4px] border-t border-r border-[#a8a8a8] pb-[5px] text-[19px] leading-[22px] text-[#666] ${size}`}>
            <span className="rotate-180 whitespace-nowrap [writing-mode:vertical-rl]">{label}</span>
          </button>
        ))}
      </div>
    </nav>
  );
}

function SignalTable() {
  return (
    <div className="flex w-[388px] shrink-0 flex-col bg-white">
      <div className="flex h-[37px] shrink-0 items-center border border-[#a8a8a8] pl-[20px] text-[18px] leading-[22px] whitespace-pre">ILA Status:  Idle</div>
      <div className="min-h-0 flex-1">
        <table className="h-full w-full table-fixed border-separate border-spacing-0 text-[19px] leading-[22px] text-white">
          <thead>
            <tr className="h-[50px] text-left text-[18px] text-black">
              <th className="w-[243px] border-r-8 border-white bg-linear-to-b from-[#f4f4f4] to-[#dedee2] p-0 pl-[25px]">Name</th>
              <th className="bg-linear-to-b from-[#f4f4f4] to-[#dedee2] p-0 pl-[23px]">Value</th>
            </tr>
          </thead>
          <tbody>
            {signals.map((s) => (
              <tr key={s.name} className={s.h}>
                <td className="border-r-8 border-white bg-black p-0">
                  <div className={`flex items-center ${s.kind === "child" ? "pl-[71px]" : "pl-[16px]"}`}>
                    {s.kind !== "child" && <span className="w-[20px]">{s.kind === "bus" && <Chevron open={s.open} />}</span>}
                    <span className="flex w-[19px] justify-center">{s.kind === "bus" ? <BusIcon /> : <BitIcon />}</span>
                    <span className={s.selected ? "flex h-[37px] w-[173px] items-center border border-[#4a6fa5] pl-[1px]" : "pl-[2px]"}>{s.name}</span>
                  </div>
                </td>
                <td className="bg-black p-0">
                  {s.selected ? (
                    <div className="mr-[4px] ml-[4px] flex h-[37px] items-center border-2 border-[#6a94cc] pl-[3px]">{s.value}</div>
                  ) : (
                    <div className="pl-[8px]">{s.value}</div>
                  )}
                </td>
              </tr>
            ))}
            <tr>
              <td className="border-r-8 border-white bg-black" />
              <td className="bg-black" />
            </tr>
          </tbody>
        </table>
      </div>
    </div>
  );
}

function WaveformPanel() {
  return (
    <main className="mt-[2px] flex min-w-0 flex-1 flex-col border-t-4 border-l-4 border-[#86e27f] bg-white">
      <header className="flex h-[45px] shrink-0 items-center bg-[#e6e6e6] pl-[6px]">
        <h1 className="text-[19px] leading-[22px] font-bold">Waveform - hw_ila_1</h1>
      </header>
      <div className="flex h-[51px] shrink-0 items-center border-b-4 border-[#e6e6e6] pl-[1px]">
        <div className="grid w-[1159px] grid-cols-22">
          {tools.map(([label, icon]) => (
            <ToolButton key={label} label={label} className="border-r-2 border-[#dcdcdc]">{icon}</ToolButton>
          ))}
        </div>
      </div>
      <div className="flex min-h-0 flex-1">
        <SignalTable />
        <div className="ml-[7px] min-w-0 flex-1 overflow-hidden bg-black">
          <Waves />
        </div>
      </div>
    </main>
  );
}

/* ---------- overlays ---------- */

const notes = [
  ["SNR", "left-[705px] top-[195px]"],
  ["数据", "left-[678px] top-[240px]"],
  ["卷积编码", "left-[695px] top-[311px]"],
  ["通过信道", "left-[684px] top-[415px]"],
  ["解调后低通滤波", "left-[546px] top-[541px]"],
  ["帧头使能", "left-[680px] top-[624px]"],
  ["数据使能", "left-[670px] top-[692px]"],
  ["相关峰", "left-[686px] top-[749px]"],
  ["帧头", "left-[676px] top-[814px]"],
  ["数据", "left-[689px] top-[868px]"],
  ["维特比译码", "left-[699px] top-[926px]"],
  ["误码统计", "left-[717px] top-[1001px]"],
];

const stamps = [
  "left-[215px] top-[420px]",
  "left-[969px] top-[420px]",
  "left-[215px] top-[857px]",
  "left-[969px] top-[857px]",
];

function Overlays() {
  return (
    <div className="pointer-events-none absolute inset-0 overflow-hidden whitespace-nowrap">
      {notes.map(([text, at]) => (
        <p key={at} className={`absolute font-['Noto_Sans','Noto_Sans_CJK_SC',sans-serif] text-[37px] leading-[42px] text-[#e83f3c] ${at}`}>{text}</p>
      ))}
      {stamps.map((at) => (
        <p key={at} className={`absolute origin-left -rotate-30 font-['Liberation_Sans','Noto_Sans_CJK_SC',sans-serif] text-[42px] leading-[42px] font-light text-[#e4cccc] ${at}`}>CSDN博客：我爱C编程</p>
      ))}
      <p className="absolute top-[943px] left-[172px] font-['Liberation_Sans','Noto_Sans_CJK_SC',sans-serif] text-[37px] leading-[42px] font-light text-[#e28080]">VX公众号：matworld</p>
      <p className="absolute right-[5px] bottom-[20px] font-['Noto_Sans_CJK_SC',sans-serif] text-[43px] leading-[42px] font-light text-[#c8c8c8]">CSDN @我爱C编程</p>
    </div>
  );
}

export default function App() {
  return (
    <div className="relative flex h-screen overflow-hidden bg-white font-['Liberation_Sans',Arial,sans-serif] text-black">
      <aside className="mr-[20px] flex w-[305px] shrink-0 flex-col">
        <DevicePanel />
        <TriggerPanel />
      </aside>
      <SideTabs />
      <WaveformPanel />
      <Overlays />
    </div>
  );
}
